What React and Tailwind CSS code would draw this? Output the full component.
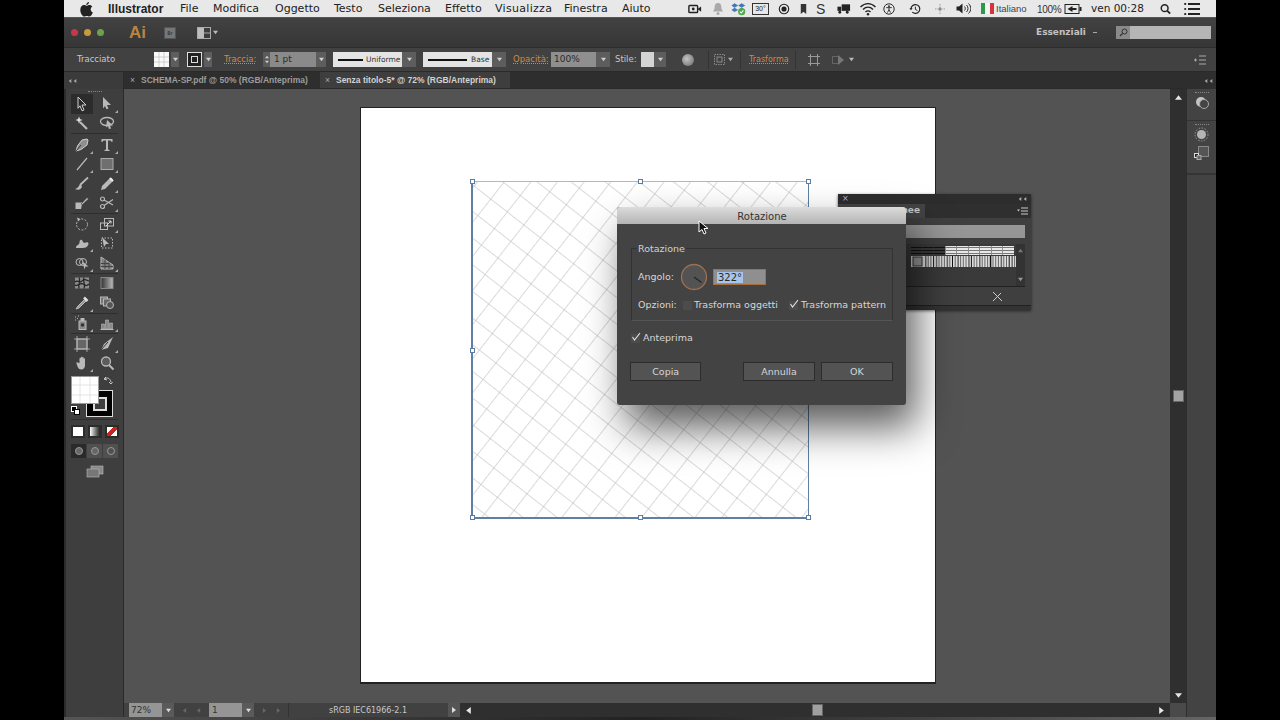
import React from "react";

const ui = "font-['DejaVu_Sans','Liberation_Sans',sans-serif]";

const Tri = ({ dir = "down", c = "#cfcfcf", s = 6 }) => {
  const p = { down: "0,1 6,1 3,5", up: "0,5 6,5 3,1", right: "1,0 5,3 1,6", left: "5,0 1,3 5,6" }[dir];
  return (
    <svg width={s} height={s} viewBox="0 0 6 6" className="shrink-0">
      <polygon points={p} fill={c} />
    </svg>
  );
};

const Ico = ({ children, w = 16, h = 16, vb = "0 0 16 16" }) => (
  <svg width={w} height={h} viewBox={vb} className="shrink-0" fill="none">
    {children}
  </svg>
);

/* ---------- menu bar ---------- */
const MenuIcons = () => (
  <div className="flex items-center h-full text-[#222] whitespace-nowrap">
    <Ico w={14} h={12} vb="0 0 16 12">
      <rect x="1" y="2" width="10" height="8" rx="1" stroke="#222" strokeWidth="1.6" />
      <path d="M11 6l4-3v6z" fill="#222" />
      <circle cx="6" cy="6" r="1.6" fill="#222" />
    </Ico>
    <div className="w-[10px]" />
    <Ico w={12} h={14} vb="0 0 12 14">
      <path d="M6 1c2.5 0 3.4 2 3.4 4.5 0 2 1.200 3 1.600 4H1c.4-1 1.600-2 1.600-4C2.600 3 3.500 1 6 1z" fill="#a9a9a9" />
      <circle cx="6" cy="11.500" r="1.500" fill="#a9a9a9" />
    </Ico>
    <div className="w-[7px]" />
    <Ico w={16} h={16} vb="0 0 18 16">
      <path d="M4 1.500l4 2.500-4 2.500L0.500 4zM12 1.500l4 2.500-4 2.500L8 4zM4 6.500l4 2.500-4 2.500-3.500-2.500zM12 6.500l4 2.500-4 2.500-4-2.500z" fill="#3f79b8" />
      <circle cx="12" cy="11" r="4" fill="#4da94a" />
      <path d="M10 11l1.500 1.500 2.500-3" stroke="#fff" strokeWidth="1.200" />
    </Ico>
    <div className="w-[5px]" />
    <div className="w-[17px] h-[12px] border border-[#333] text-[7px] leading-[10px] text-center font-['Liberation_Sans',sans-serif]">30°</div>
    <div className="w-[9px]" />
    <Ico w={12} h={12} vb="0 0 14 14">
      <circle cx="7" cy="7" r="5.500" stroke="#222" strokeWidth="1.300" />
      <circle cx="7" cy="7" r="3" fill="#222" />
    </Ico>
    <div className="w-[10px]" />
    <Ico w={7} h={12} vb="0 0 9 13">
      <path d="M1 0h7v13L4.500 10 1 13z" fill="#333" />
    </Ico>
    <div className="w-[9px]" />
    <span className="text-[14px] leading-none font-['Liberation_Sans',sans-serif] text-[#333] w-[9px]">S</span>
    <div className="w-[12px]" />
    <Ico w={14} h={12} vb="0 0 15 12">
      <rect x="5" y="1" width="9" height="7" fill="#222" />
      <rect x="0.500" y="3.500" width="4" height="4.500" fill="#222" />
      <circle cx="3" cy="9.500" r="1.500" fill="#222" />
      <circle cx="11" cy="9.500" r="1.500" fill="#222" />
    </Ico>
    <div className="w-[8px]" />
    <Ico w={18} h={14} vb="0 0 17 14">
      <path d="M1 5c4.500-4.500 10.500-4.500 15 0M3.500 7.500c3-3 7-3 10 0M6 10c1.500-1.500 3.500-1.500 5 0" stroke="#222" strokeWidth="1.400" />
      <circle cx="8.500" cy="12.200" r="1.200" fill="#222" />
    </Ico>
    <div className="w-[6px]" />
    <Ico w={12} h={12} vb="0 0 15 15">
      <circle cx="7.500" cy="7.500" r="6.500" stroke="#222" strokeWidth="1.200" />
      <circle cx="7.500" cy="4" r="1.100" fill="#222" />
      <path d="M4 5.800h7M7.500 5.800v3M7.500 8.500l-2 3.500M7.500 8.500l2 3.500" stroke="#222" strokeWidth="1.100" />
    </Ico>
    <div className="w-[14px]" />
    <Ico w={12} h={12} vb="0 0 15 14">
      <path d="M2.500 7a5.500 5.500 0 1 1 1.600 3.900" stroke="#222" strokeWidth="1.500" />
      <path d="M0.500 6h4L2.500 8.500z" fill="#222" />
      <path d="M8 4v3.500l2.500 1.500" stroke="#222" strokeWidth="1.200" />
    </Ico>
    <div className="w-[14px]" />
    <Ico w={10} h={10} vb="0 0 12 12">
      <circle cx="6" cy="6" r="2" fill="#8a8a8a" />
      <path d="M6 0v3M6 9v3M0 6h3M9 6h3" stroke="#8a8a8a" strokeWidth="1.200" strokeDasharray="1 1" />
    </Ico>
    <div className="w-[11px]" />
    <Ico w={15} h={13} vb="0 0 15 13">
      <path d="M0.500 4.500h2.500L6.500 1.500v10L3 8.500H0.500z" fill="#222" />
      <path d="M8.500 4.500c1 1 1 3 0 4M10.500 3c2 2 2 5 0 7M12.500 1.500c3 3 3 7 0 10" stroke="#222" strokeWidth="1" />
    </Ico>
    <div className="w-[10px]" />
    <div className="flex h-[11px] w-[13px]">
      <div className="w-1/3 bg-[#2a9a4a]" />
      <div className="w-1/3 bg-[#f4f4f4]" />
      <div className="w-1/3 bg-[#d8333a]" />
    </div>
    <span className="text-[9.5px] w-[32px] text-[#444] ml-[2px] pt-px font-['Liberation_Sans',sans-serif]">Italiano</span>
    <span className="text-[10px] w-[23px] text-[#333] ml-[9px] pt-px tracking-[-0.3px] font-['Liberation_Sans',sans-serif]">100%</span>
    <div className="ml-[4px]">
      <Ico w={18} h={10} vb="0 0 17 10">
        <rect x="0.500" y="0.500" width="14" height="9" stroke="#222" />
        <path d="M15 3h2v4h-2z" fill="#222" />
        <path d="M3 5l5-3v2h4v2H8v2z" fill="#222" />
      </Ico>
    </div>
    <span className="text-[10.5px] w-[55px] text-[#222] ml-[9px] pt-px">ven 00:28</span>
    <div className="ml-[14px]">
      <Ico w={11} h={12} vb="0 0 13 13">
        <circle cx="5.500" cy="5.500" r="4" stroke="#222" strokeWidth="1.800" />
        <path d="M8.500 8.500l3.500 3.500" stroke="#222" strokeWidth="2.200" />
      </Ico>
    </div>
    <div className="ml-[13px]">
      <Ico w={16} h={12} vb="0 0 16 12">
        <path d="M4 1h12M4 6h12M4 11h12" stroke="#222" strokeWidth="1.800" />
        <circle cx="1.200" cy="1" r="1.100" fill="#222" />
        <circle cx="1.200" cy="6" r="1.100" fill="#222" />
        <circle cx="1.200" cy="11" r="1.100" fill="#222" />
      </Ico>
    </div>
  </div>
);

const MenuBar = () => (
  <div className={`h-[18px] shrink-0 flex items-center justify-between bg-[#e8e8e8] pl-[16px] pr-[16px] border-b border-[#555] ${ui}`}>
    <div className="flex items-center text-[11px] text-[#222] whitespace-nowrap pt-px">
      <svg width="13" height="15" viewBox="0 0 13 15" className="shrink-0 mr-[15px]">
        <path d="M9 0c.1 1.600-1.300 3-2.700 3C6.100 1.500 7.600.1 9 0zM6.500 3.800c.7 0 1.700-.8 3-.8 1.100 0 2.200.6 2.900 1.600-2.500 1.400-2.100 5 .5 6-.7 1.700-2 4-3.500 4-.9 0-1.400-.6-2.500-.6s-1.700.6-2.600.6C2.500 14.600.3 11.200.3 8 .3 5 2.200 3.100 4 3.100c1 0 1.900.7 2.500.7z" fill="#222" />
      </svg>
      <span className="w-[72px] font-bold text-[12px] font-['Liberation_Sans',sans-serif]">Illustrator</span>
      <span className="w-[33px]">File</span>
      <span className="w-[62px]">Modifica</span>
      <span className="w-[59px]">Oggetto</span>
      <span className="w-[44px]">Testo</span>
      <span className="w-[67px]">Seleziona</span>
      <span className="w-[50px]">Effetto</span>
      <span className="w-[69px] tracking-[0.3px]">Visualizza</span>
      <span className="w-[58px]">Finestra</span>
      <span className="w-[40px]">Aiuto</span>
    </div>
    <MenuIcons />
  </div>
);

/* ---------- title bar ---------- */
const TitleBar = () => (
  <div className={`h-[30px] shrink-0 flex items-center bg-gradient-to-b from-[#424242] to-[#363636] border-b border-[#2c2c2c] pl-[7px] pr-[5px] ${ui}`}>
    <div className="flex gap-[6px] items-center">
      <div className="w-[7px] h-[7px] rounded-full bg-[#c23a4a]" />
      <div className="w-[7px] h-[7px] rounded-full bg-[#c89a3c]" />
      <div className="w-[7px] h-[7px] rounded-full bg-[#6ea24a]" />
    </div>
    <span className="ml-[25px] text-[17px] leading-none font-bold text-[#b98440] font-['Liberation_Sans',sans-serif]">Ai</span>
    <div className="ml-[18px] w-[12px] h-[12px] bg-[#777] border border-[#555] text-[5px] leading-[10px] text-center text-[#222]">Br</div>
    <div className="ml-[21px] flex items-center gap-[2px]">
      <Ico w={14} h={12} vb="0 0 14 12">
        <rect x="0.500" y="0.500" width="13" height="11" stroke="#aaa" />
        <rect x="1" y="1" width="6" height="10" fill="#bdbdbd" />
        <path d="M7 6h7" stroke="#aaa" />
      </Ico>
      <Tri s={5} c="#bbb" />
    </div>
    <div className="ml-auto flex items-center">
      <span className="text-[9px] font-bold text-[#c2c2c2] w-[49px] whitespace-nowrap">Essenziali</span>
      <div className="ml-[8px] w-[4px] h-[1px] bg-[#aaa]" />
      <div className="ml-[19px] w-[95px] h-[13px] flex bg-[#b5b5b5]">
        <div className="w-[14px] h-full flex items-center justify-center bg-[#8a8a8a]">
          <Ico w={9} h={9} vb="0 0 9 9">
            <circle cx="5.500" cy="3.500" r="2.500" stroke="#333" />
            <path d="M3.500 5.500L1 8" stroke="#333" strokeWidth="1.200" />
          </Ico>
        </div>
      </div>
    </div>
  </div>
);

/* ---------- control bar ---------- */
const DD = ({ w = "w-[10px]" }) => (
  <div className={`${w} h-[15px] bg-[#5d5d5d] flex items-center justify-center`}>
    <Tri s={5} c="#d0d0d0" />
  </div>
);
const GridSwatch = () => (
  <svg width="15" height="15" viewBox="0 0 15 15" className="shrink-0">
    <rect width="15" height="15" fill="#fafafa" />
    <path d="M5 0v15M10 0v15M0 5h15M0 10h15" stroke="#bbb" strokeWidth="0.600" />
  </svg>
);
const Orange = ({ children, cls = "" }) => (
  <span className={`text-[8.5px] text-[#cc8a42] underline decoration-dotted whitespace-nowrap ${cls}`}>{children}</span>
);

const ControlBar = () => (
  <div className={`h-[24px] shrink-0 flex items-center bg-[#414141] border-b border-[#2a2a2a] pl-[13px] pr-[10px] ${ui}`}>
    <span className="text-[8.5px] text-[#c8c8c8] w-[77px]">Tracciato</span>
    <GridSwatch />
    <div className="ml-[2px]"><DD w="w-[8px]" /></div>
    <div className="ml-[8px] w-[15px] h-[15px] bg-[#222] border border-[#ddd] flex items-center justify-center">
      <div className="w-[7px] h-[7px] border border-[#ddd]" />
    </div>
    <div className="ml-[2px]"><DD w="w-[8px]" /></div>
    <Orange cls="ml-[12px] w-[30px]">Traccia:</Orange>
    <div className="ml-[9px] w-[7px] h-[15px] flex flex-col items-center justify-center bg-[#5a5a5a] gap-[1px]">
      <Tri dir="up" s={4} />
      <Tri s={4} />
    </div>
    <div className="w-[46px] h-[15px] bg-[#8a8a8a] text-[9px] leading-[15px] pl-[4px] text-[#2a2a2a]">1 pt</div>
    <DD />
    <div className="ml-[7px] w-[69px] h-[15px] bg-[#e4e4e4] flex items-center pl-[5px] whitespace-nowrap overflow-hidden">
      <div className="w-[25px] h-[2px] bg-[#111] shrink-0" />
      <span className="ml-[3px] text-[7.5px] text-[#333]">Uniforme</span>
    </div>
    <DD w="w-[14px]" />
    <div className="ml-[7px] w-[69px] h-[15px] bg-[#e4e4e4] flex items-center pl-[5px]">
      <div className="w-[39px] h-[2px] bg-[#111]" />
      <span className="ml-[4px] text-[7.5px] text-[#333]">Base</span>
    </div>
    <DD w="w-[14px]" />
    <Orange cls="ml-[7px] w-[32px]">Opacità:</Orange>
    <div className="ml-[6px] w-[45px] h-[15px] bg-[#8f8f8f] text-[9px] leading-[14px] pl-[3px] text-[#2a2a2a]">100%</div>
    <DD w="w-[14px]" />
    <span className="ml-[5px] text-[8.5px] text-[#c8c8c8] w-[21px]">Stile:</span>
    <div className="ml-[5px] w-[13px] h-[15px] bg-[#d4d4d4]" />
    <DD w="w-[12px]" />
    <div className="ml-[16px] w-[12px] h-[12px] rounded-full bg-[radial-gradient(circle_at_40%_40%,#c4c4c4,#666)]" />
    <div className="ml-[14px] w-px h-[18px] bg-[#333]" />
    <div className="ml-[4px] flex items-center gap-[2px]">
      <Ico w={13} h={13} vb="0 0 13 13">
        <rect x="1.500" y="1.500" width="10" height="10" stroke="#8a8a8a" strokeDasharray="1.500 1" />
        <rect x="4" y="4" width="5" height="5" stroke="#8a8a8a" />
      </Ico>
      <Tri s={5} c="#aaa" />
    </div>
    <div className="ml-[7px] w-px h-[18px] bg-[#333]" />
    <span className="ml-[8px] w-[41px] text-[8px] text-[#cc8a42] underline decoration-dotted whitespace-nowrap">Trasforma</span>
    <div className="ml-[5px] w-px h-[18px] bg-[#333]" />
    <div className="ml-[12px]">
      <Ico w={12} h={12} vb="0 0 12 12">
        <rect x="2.500" y="2.500" width="7" height="7" stroke="#999" />
        <path d="M2.500 0v2M9.500 0v2M2.500 10v2M9.500 10v2M0 2.500h2M10 2.500h2M0 9.500h2M10 9.500h2" stroke="#999" />
      </Ico>
    </div>
    <div className="ml-[12px] flex items-center gap-[4px]">
      <Ico w={13} h={12} vb="0 0 13 12">
        <rect x="0.500" y="2.500" width="6" height="7" stroke="#888" strokeDasharray="1 1" />
        <path d="M6 1l6 5-6 5z" fill="#777" />
      </Ico>
      <Tri s={5} c="#bbb" />
    </div>
    <div className="ml-auto">
      <Ico w={12} h={10} vb="0 0 12 10">
        <path d="M5 1h7M5 5h7M5 9h7M0 5h3" stroke="#aaa" />
        <path d="M1.500 3.500v3" stroke="#aaa" />
      </Ico>
    </div>
  </div>
);

/* ---------- tabs ---------- */
const Tab = ({ label, active, cls }) => (
  <div className={`h-full flex items-center whitespace-nowrap text-[8.5px] font-bold font-['Liberation_Sans',sans-serif] ${cls} ${active ? "bg-[#3e3e3e] text-[#d2d2d2]" : "text-[#9c9c9c]"}`}>
    <span className="mr-[6px] text-[#aaa] font-normal">×</span>
    {label}
  </div>
);
const TabBar = () => (
  <div className={`h-[17px] shrink-0 flex bg-[#2e2e2e] ${ui}`}>
    <div className="w-[60px] shrink-0 bg-[#3b3b3b] border-r border-[#2a2a2a] pl-[4px] flex items-center gap-[1px]">
      <Tri dir="left" s={4} c="#aaa" />
      <Tri dir="left" s={4} c="#aaa" />
    </div>
    <div className="flex-1 flex pl-[6px] border-b border-[#2a2a2a]">
      <Tab label="SCHEMA-SP.pdf @ 50% (RGB/Anteprima)" cls="w-[190px]" />
      <Tab label="Senza titolo-5* @ 72% (RGB/Anteprima)" active cls="w-[190px] pl-[5px]" />
    </div>
    <div className="w-[30px] shrink-0 bg-[#2e2e2e] flex items-center justify-end pr-[3px] gap-[1px]">
      <Tri dir="left" s={4} c="#aaa" />
      <Tri dir="left" s={4} c="#aaa" />
    </div>
  </div>
);

/* ---------- tools ---------- */
const G = "#b9b9b9";
const tools = {
  sel: <path d="M4 1l8 8H8l2 5-2 .800-2-5-2 2.500z" fill="#2a2a2a" stroke="#cfcfcf" />,
  dsel: <path d="M4 1l8 8H8l1.500 3.500-2 .800L6 10l-2 2.500z" fill={G} />,
  wand: <g><path d="M6 7l7 7" stroke={G} strokeWidth="2.200" /><path d="M5 1.500l1 2.500 2.500 1-2.500 1-1 2.500-1-2.500L1.500 5 4 4z" fill="#ddd" /></g>,
  lasso: <g><ellipse cx="8" cy="6.500" rx="6.500" ry="4" stroke={G} strokeWidth="1.300" /><path d="M8 5l6 5.500h-3l1 3-2 .500-1-3-2 1.500z" fill={G} /></g>,
  pen: <g><path d="M13 2L8 3 3.500 9 2 14l5-1.500L13 8l1-5z" fill="#8f8f8f" stroke="#cfcfcf" /><path d="M2 14l5-6" stroke="#333" /></g>,
  text: <path d="M2.500 2h11v3h-1c-.2-1-.6-1.500-2-1.500H9v9l1.500.5v1h-5v-1l1.500-.5v-9H5.500c-1.400 0-1.800.5-2 1.500h-1z" fill={G} />,
  line: <path d="M3 14L13 2" stroke={G} strokeWidth="1.200" />,
  rect: <rect x="2" y="2.500" width="12" height="11" fill="#6f6f6f" stroke="#aaa" />,
  brush: <g><path d="M14 1.500L6 9" stroke={G} strokeWidth="1.800" /><path d="M6.500 8.500c-2 .5-1.500 3.500-5.500 4.500 3 1.500 7 .5 7-3z" fill={G} /></g>,
  pencil: <g><path d="M11 2l3 3-8 8-4 1 1-4z" fill={G} /><path d="M11 2l3 3" stroke="#eee" strokeWidth="2" /></g>,
  blob: <g><path d="M1.500 7.500h7l-1.500 6.500H1.500z" fill={G} /><path d="M7 9l6-6.500 1.500 1.500-6.500 6z" fill={G} stroke="#333" strokeWidth="0.500" /></g>,
  scissors: <g><circle cx="3.500" cy="4" r="2" stroke={G} strokeWidth="1.200" /><circle cx="3.500" cy="11.500" r="2" stroke={G} strokeWidth="1.200" /><path d="M5 5l9 5M5 10.500l9-6" stroke={G} strokeWidth="1.200" /></g>,
  rotate: <g><circle cx="8" cy="8.500" r="5.500" stroke={G} strokeDasharray="2 1.500" /><path d="M3 1.500l3.500 1.500-2.500 2.500z" fill={G} /></g>,
  scale: <g><rect x="1.500" y="7" width="7" height="6.500" stroke={G} /><rect x="5.500" y="2.500" width="9" height="7.500" stroke={G} /><path d="M7 10l5-5M12 5H9.500M12 5v2.500" stroke="#ddd" /></g>,
  warp: <path d="M2 13c0-3 1.500-2 3-4 1-1.500 0-3 1.500-4s2 .5 2.500 2c.5 1 2 1 3 .5 1.500-.5 2.500 0 2.500 1.500-1 3-3 4-6 4H2z" fill={G} />,
  free: <g><rect x="2.500" y="3" width="11" height="10" stroke={G} strokeDasharray="1.500 1.500" /><path d="M3 2l7 7H7l-2 3z" fill={G} /></g>,
  shape: <g><circle cx="5.500" cy="7" r="3.500" stroke={G} /><circle cx="9" cy="7" r="3.500" stroke={G} /><path d="M8.500 6.500l6 5h-3l-1 3z" fill={G} /></g>,
  persp: <g><path d="M2 2l12 8v4H2z" fill="#7e7e7e" stroke={G} /><path d="M6 4.500V14M10 7.500V14M2 8.500h8M2 11.500h12" stroke="#444" /></g>,
  mesh: <g><rect x="1" y="2.500" width="14" height="11" fill="#8c8c8c" /><path d="M1 7c3-3 5 2 7-1s4-1 7 0M1 10c3 2 5-3 8-1s4 2 6 0M5 2.500c2 3-1 6 0 11M10 2.500c-2 3 2 6 0 11" stroke="#222" strokeWidth="1.200" /></g>,
  grad: <g><defs><linearGradient id="tg"><stop offset="0" stopColor="#333" /><stop offset="1" stopColor="#bbb" /></linearGradient></defs><rect x="2" y="2.500" width="12" height="11" fill="url(#tg)" stroke="#888" /></g>,
  eye: <g><path d="M12 3L4 11l-2 3 3-1 8-8" fill="#9a9a9a" stroke={G} /><path d="M10 2.500l3.500 3.500" stroke="#ddd" strokeWidth="2.500" /></g>,
  blend: <g><rect x="1.500" y="2" width="7" height="7" fill="#777" stroke={G} /><rect x="4.500" y="4" width="7" height="7" fill="#666" stroke={G} /><circle cx="11" cy="10" r="3.500" fill="#555" stroke={G} /></g>,
  spray: <g><rect x="5" y="6" width="7" height="8.500" fill="#8a8a8a" stroke={G} /><circle cx="8.500" cy="10" r="1.800" fill="#333" /><rect x="6.500" y="3" width="4" height="3" fill={G} /><path d="M1 2h1M3 3.500h1M1 5h1M4 1h1" stroke={G} /></g>,
  chart: <g><path d="M1.500 14.500h13" stroke={G} /><path d="M2.500 9h3v5h-3zM6.500 5h3v9h-3zM10.500 8h3v6h-3z" fill="#8a8a8a" stroke={G} strokeWidth="0.600" /></g>,
  art: <g><rect x="3" y="3" width="10" height="10" fill="#666" stroke={G} /><path d="M0 3h16M0 13h16M3 0v16M13 0v16" stroke={G} strokeWidth="0.800" /></g>,
  slice: <g><path d="M14 1L5 8l-3 6 7-2z" fill={G} /><path d="M2 14l7-8" stroke="#333" /></g>,
  hand: <path d="M4 8V3.500c0-1 1.300-1 1.300 0V7V2.500c0-1 1.500-1 1.500 0V7V2.800c0-1 1.400-1 1.400 0V7.500V4c0-1 1.300-1 1.300 0v6.500c0 2-1.500 4-3.500 4-2.500 0-3-1-4-3L1 8.500c-.5-1 .8-1.600 1.400-.8z" fill={G} transform="translate(1.500 0)" />,
  zoom: <g><circle cx="7" cy="6.500" r="4.500" fill="#5c5c5c" stroke={G} strokeWidth="1.300" /><path d="M10 10l4.500 4.500" stroke={G} strokeWidth="2" /></g>,
};

const T = ({ n, active, corner }) => (
  <div className={`relative w-[22px] h-[19.5px] flex items-center justify-center ${active ? "bg-[#2c2c2c]" : ""}`}>
    <Ico>{tools[n]}</Ico>
    {corner && <div className="absolute right-0 bottom-[1px] w-0 h-0 border-l-[3px] border-l-transparent border-b-[3px] border-b-[#aaa]" />}
  </div>
);
const Row = ({ a, b, ac, bc, active }) => (
  <div className="flex justify-center gap-[3px]">
    <T n={a} corner={ac} active={active} />
    <T n={b} corner={bc} />
  </div>
);
const Sep = () => <div className="h-px bg-[#2e2e2e] mx-[5px]" />;

const Grip = ({ cls = "" }) => <div className={`h-[2px] w-[14px] border-t border-dotted border-[#888] ${cls}`} />;

const ToolPanel = () => (
  <div className="w-[60px] shrink-0 bg-[#3e3e3e] border-l-2 border-[#2b2b2b] border-r border-r-[#2a2a2a] flex flex-col">
    <div className="h-[5px] flex justify-center pt-[2px]"><Grip /></div>
    <Row a="sel" b="dsel" bc active />
    <Row a="wand" b="lasso" />
    <Sep />
    <div className="h-px" />
    <Row a="pen" b="text" ac bc />
    <Row a="line" b="rect" ac bc />
    <Row a="brush" b="pencil" bc />
    <Row a="blob" b="scissors" bc />
    <Sep />
    <Row a="rotate" b="scale" bc />
    <Row a="warp" b="free" ac />
    <Row a="shape" b="persp" ac bc />
    <Sep />
    <Row a="mesh" b="grad" />
    <Row a="eye" b="blend" ac />
    <Sep />
    <Row a="spray" b="chart" ac bc />
    <Sep />
    <Row a="art" b="slice" bc />
    <Row a="hand" b="zoom" ac />
    <div className="relative h-[43px] shrink-0 mt-[3px]">
      <div className="absolute left-[20px] top-[14px] w-[27px] h-[27px] bg-black border border-[#ddd] flex items-center justify-center">
        <div className="w-[14px] h-[14px] border-2 border-[#ddd] bg-[#3e3e3e]" />
      </div>
      <div className="absolute left-[5px] top-0 w-[28px] h-[28px] bg-white border border-[#999]">
        <svg width="26" height="26" viewBox="0 0 26 26">
          <path d="M8 0v26M18 0v26M0 8h26M0 18h26" stroke="#ddd" strokeWidth="0.800" />
        </svg>
      </div>
      <div className="absolute left-[37px] top-0">
        <Ico w={10} h={10} vb="0 0 10 10"><path d="M1 3c3-2 6-1 7 3M1 3l2-2M1 3l3 1M8 8L6 6M8 8l1.500-2" stroke="#ccc" /></Ico>
      </div>
      <div className="absolute left-[5px] top-[30px] w-[6px] h-[6px] bg-black border border-white" />
      <div className="absolute left-[8px] top-[33px] w-[6px] h-[6px] bg-white border border-black" />
    </div>
    <Sep />
    <div className="flex gap-[3px] justify-center mt-[5px]">
      <div className="w-[14px] h-[13px] bg-white border-2 border-[#2c2c2c]" />
      <div className="w-[14px] h-[13px] bg-gradient-to-r from-white to-[#222] border-2 border-[#2c2c2c]" />
      <div className="w-[14px] h-[13px] bg-[linear-gradient(135deg,#fff_35%,#c22_35%,#c22_65%,#fff_65%)] border-2 border-[#2c2c2c]" />
    </div>
    <div className="mt-[6px] mx-[5px] flex h-[14px] gap-px">
      <div className="flex-1 bg-[#2a2a2a] flex items-center justify-center"><div className="w-[8px] h-[8px] rounded-full border border-[#999] bg-[#666]" /></div>
      <div className="flex-1 bg-[#505050] flex items-center justify-center"><div className="w-[8px] h-[8px] rounded-full border border-[#999] bg-[#666]" /></div>
      <div className="flex-1 bg-[#505050] flex items-center justify-center"><div className="w-[8px] h-[8px] rounded-full border border-[#999]" /></div>
    </div>
    <div className="mt-[7px] flex justify-center">
      <Ico w={18} h={13} vb="0 0 18 13">
        <rect x="5" y="1" width="12" height="8" fill="#888" stroke="#bbb" strokeWidth="0.600" />
        <rect x="1" y="4" width="12" height="8" fill="#777" stroke="#bbb" strokeWidth="0.600" />
      </Ico>
    </div>
  </div>
);

/* ---------- artboard ---------- */
const Handle = ({ cls }) => <div className={`absolute w-[5px] h-[5px] bg-white border border-[#5c7da3] ${cls}`} />;

const Selection = () => (
  <div className="absolute left-[110px] top-[73px] w-[338px] h-[338px] border border-[#5f7fa3] border-t-[#a9bac9] border-l-2 border-b-2">
    <svg width="335" height="335" className="block">
      <defs>
        <pattern id="hatch" width="21" height="21" patternUnits="userSpaceOnUse" patternTransform="translate(33.7 268.7) rotate(38)">
          <path d="M0 0H21M0 0V21" stroke="#b6b6b6" strokeWidth="1" fill="none" />
        </pattern>
      </defs>
      <rect width="335" height="335" fill="url(#hatch)" />
    </svg>
    <Handle cls="-left-[3px] -top-[3px]" />
    <Handle cls="left-[165px] -top-[3px]" />
    <Handle cls="-right-[3px] -top-[3px]" />
    <Handle cls="-left-[3px] top-[166px]" />
    <Handle cls="-left-[3px] -bottom-[3px]" />
    <Handle cls="left-[165px] -bottom-[3px]" />
    <Handle cls="-right-[3px] -bottom-[3px]" />
  </div>
);

/* ---------- swatch panel ---------- */
const swatchRow1 = [...Array(9)].map((_, i) => i);
const SwatchStrip = () => (
  <svg width="110" height="22" viewBox="0 0 110 22" className="block">
    {swatchRow1.map((i) => (
      <g key={i}>
        <rect x={i * 11.5} y="0" width="11" height="9" fill={i < 3 ? "#3a3a3a" : "#e8e8e8"} />
        {[1, 4, 7].map((y) => (
          <rect key={y} x={i * 11.5} y={y} width="11" height="1" fill={i < 3 ? "#111" : "#777"} />
        ))}
      </g>
    ))}
    <rect x="0" y="10" width="110" height="11" fill="#ddd" />
    {[...Array(36)].map((_, i) => (
      <rect key={i} x={14 + i * 2.700} y="10" width={i % 4 === 0 ? 1.500 : 1} height="11" fill={i % 7 === 3 ? "#111" : "#666"} />
    ))}
    <rect x="2" y="11" width="9" height="9" fill="#999" stroke="#333" />
  </svg>
);
const FloatPanel = () => (
  <div className={`absolute left-[714px] top-[105px] w-[193px] h-[116px] bg-[#3f3f3f] shadow-[0_1px_3px_rgba(0,0,0,0.6)] flex flex-col ${ui}`}>
    <div className="h-[10px] bg-[#2d2d2d] flex items-center justify-between px-[4px]">
      <span className="text-[8px] leading-none text-[#bbb]">×</span>
      <div className="flex gap-px"><Tri dir="left" s={4} c="#aaa" /><Tri dir="left" s={4} c="#aaa" /></div>
    </div>
    <div className="h-[14px] bg-[#2f2f2f] flex items-center justify-between pr-[3px]">
      <div className="w-[87px] h-full bg-[#444] flex items-center justify-end pr-[5px]">
        <span className="text-[9px] font-bold text-[#c8c8c8]">nee</span>
      </div>
      <Ico w={11} h={8} vb="0 0 11 8"><path d="M4 1h7M4 4h7M4 7h7" stroke="#ccc" /><path d="M0 2.500h3L1.500 4.500z" fill="#ccc" /></Ico>
    </div>
    <div className="mt-[7px] mx-[6px] h-[13px] bg-[#969696]" />
    <div className="mt-[6px] mx-[6px] h-[43px] bg-[#3a3a3a] border-b border-[#222] flex justify-end">
      <div className="w-[105px] pt-[2px] overflow-hidden"><SwatchStrip /></div>
      <div className="w-[9px] bg-[#333] flex flex-col justify-between items-center py-[4px]">
        <Tri dir="up" s={5} c="#777" />
        <Tri s={5} c="#999" />
      </div>
    </div>
    <div className="flex-1 flex items-center justify-end pr-[28px]">
      <Ico w={11} h={11} vb="0 0 11 11"><path d="M1 10L9 2M1 1l9 9" stroke="#ccc" /></Ico>
    </div>
    <div className="h-[5px] bg-[#333] flex justify-center items-center border-t border-[#222]" />
  </div>
);

/* ---------- dialog ---------- */
const Check = ({ on }) => (
  <div className="relative w-[9px] h-[9px] bg-[#4c4c4c] shrink-0">
    {on && (
      <svg width="11" height="11" viewBox="0 0 11 11" className="absolute -top-[2px] left-0">
        <path d="M1.500 5l2 3L9 1" stroke="#e4e4e4" strokeWidth="1.100" fill="none" />
      </svg>
    )}
  </div>
);
const Btn = ({ children, cls = "" }) => (
  <div className={`h-[19px] bg-[#535353] border border-[#2c2c2c] flex items-center justify-center text-[9.500px] text-[#d6d6d6] ${cls}`}>{children}</div>
);

const Dialog = () => (
  <div className={`absolute left-[493px] top-[118px] w-[289px] h-[198px] rounded-[3px] bg-[#434343] shadow-[10px_22px_40px_rgba(0,0,0,0.65)] flex flex-col whitespace-nowrap ${ui}`}>
    <div className="h-[17px] shrink-0 rounded-t-[3px] bg-gradient-to-b from-[#dcdcdc] to-[#b4b4b4] flex items-center justify-center text-[10px] text-[#333] pl-[1px] pt-px">Rotazione</div>
    <div className="relative ml-[14px] mr-[13px] mt-[24px] h-[73px] border border-[#333] border-b-[#555]">
      <span className="absolute left-[5px] -top-[6px] bg-[#434343] px-px text-[9.500px] leading-[12px] text-[#d0d0d0]">Rotazione</span>
      <div className="flex items-center mt-[14px] ml-[6px]">
        <span className="text-[9.500px] text-[#d6d6d6] w-[42px]">Angolo:</span>
        <svg width="28" height="28" viewBox="0 0 28 28" className="shrink-0">
          <circle cx="14" cy="14" r="12.500" fill="#535353" stroke="#a0714f" strokeWidth="1.300" />
          <path d="M14 14l7.500 5.500" stroke="#222" strokeWidth="1.100" />
        </svg>
        <div className="ml-[5px] w-[53px] h-[16px] bg-[#8f8f8f] border border-[#a8703f] flex items-center pl-[3px]">
          <span className="bg-[#a9c4ec] text-[10px] leading-[11px] text-[#2a2a2a] px-px">322°</span>
        </div>
      </div>
      <div className="flex items-center mt-[7px] ml-[6px] text-[9.500px] text-[#d6d6d6]">
        <span className="w-[45px]">Opzioni:</span>
        <Check />
        <span className="ml-[2px] w-[95px]">Trasforma oggetti</span>
        <Check on />
        <span className="ml-[3px]">Trasforma pattern</span>
      </div>
    </div>
    <div className="flex items-center mx-[14px] mt-[10px] text-[9.500px] text-[#d6d6d6]">
      <Check on />
      <span className="ml-[3px]">Anteprima</span>
    </div>
    <div className="flex mx-[13px] mt-[17px]">
      <Btn cls="w-[72px]">Copia</Btn>
      <Btn cls="w-[72px] ml-[42px]">Annulla</Btn>
      <Btn cls="w-[73px] ml-[6px] border-[#1e1e1e]">OK</Btn>
    </div>
  </div>
);

const Cursor = () => (
  <svg width="12" height="16" viewBox="0 0 12 16" className="absolute left-[574px] top-[131px]">
    <path d="M1 1v11l3-2.500 2 4.500 2-1-2-4.500h4z" fill="#111" stroke="#fff" strokeWidth="1" />
  </svg>
);

const Canvas = () => (
  <div className="relative flex-1 bg-[#535353] pl-[236px] pt-[18px] overflow-hidden min-w-0">
    <div className="relative w-[576px] h-[577px] bg-white border-l border-t border-b-2 border-r border-[#222]">
      <Selection />
    </div>
    <FloatPanel />
    <Dialog />
    <Cursor />
  </div>
);

const VScroll = () => (
  <div className="w-[16px] shrink-0 bg-[#2f2f2f] flex flex-col items-center pt-[5px] pb-[4px]">
    <Tri dir="up" s={7} c="#e4e4e4" />
    <div className="w-[11px] h-[12px] mt-[289px] bg-[#a3a3a3] border border-[#666]" />
    <div className="flex-1" />
    <Tri s={7} c="#e4e4e4" />
  </div>
);

const Dock = () => (
  <div className="w-[30px] shrink-0 bg-[#434343] border-l border-[#2e2e2e] flex flex-col">
    <div className="h-[32px] border-b border-[#333] flex flex-col items-center">
      <Grip cls="mt-[3px]" />
      <div className="mt-[2px]">
        <Ico w={16} h={14} vb="0 0 16 14">
          <circle cx="7" cy="6" r="5" fill="#c4c4c4" />
          <circle cx="10" cy="8" r="4.500" fill="#444" stroke="#aaa" />
        </Ico>
      </div>
    </div>
    <div className="h-[54px] border-b-2 border-[#343434] flex flex-col items-center">
      <Grip cls="mt-[3px]" />
      <div className="mt-[1px]">
        <Ico w={15} h={15} vb="0 0 15 15">
          <circle cx="7.500" cy="7.500" r="6.500" stroke="#999" strokeDasharray="1.500 1.500" />
          <circle cx="7.500" cy="7.500" r="4.500" fill="#b5b5b5" />
        </Ico>
      </div>
      <div className="mt-[4px]">
        <Ico w={15} h={14} vb="0 0 15 14">
          <rect x="4.500" y="0.500" width="10" height="10" stroke="#888" fill="#555" />
          <rect x="0.500" y="7.500" width="4" height="4" stroke="#ddd" fill="#222" />
          <rect x="3" y="9.500" width="4" height="4" stroke="#aaa" fill="#666" />
        </Ico>
      </div>
    </div>
  </div>
);

const StatusBar = () => (
  <div className={`h-[14px] shrink-0 flex bg-[#2f2f2f] ${ui}`}>
    <div className="w-[60px] shrink-0 bg-[#3e3e3e] border-l-2 border-[#2b2b2b] border-r border-r-[#2a2a2a]" />
    <div className="w-[5px] bg-[#414141]" />
    <div className="w-[33px] bg-[#959595] text-[9px] leading-[14px] pl-[2px] text-[#333]">72%</div>
    <div className="w-[12px] bg-[#5a5a5a] flex items-center justify-center"><Tri s={5} c="#ddd" /></div>
    <div className="w-[35px] bg-[#414141] flex items-center justify-around px-[3px]">
      <Tri dir="left" s={5} c="#666" />
      <Tri dir="left" s={5} c="#666" />
    </div>
    <div className="w-[33px] bg-[#959595] text-[9px] leading-[14px] pl-[3px] text-[#333]">1</div>
    <div className="w-[12px] bg-[#5a5a5a] flex items-center justify-center"><Tri s={5} c="#ddd" /></div>
    <div className="w-[34px] bg-[#414141] flex items-center justify-around px-[3px]">
      <Tri dir="right" s={5} c="#666" />
      <Tri dir="right" s={5} c="#666" />
    </div>
    <div className="w-[160px] bg-[#414141] border-l border-[#333] text-center text-[8px] leading-[15px] text-[#c8c8c8] pr-[1px] whitespace-nowrap">sRGB IEC61966-2.1</div>
    <div className="w-[12px] bg-[#555] flex items-center justify-center"><Tri dir="right" s={6} c="#ddd" /></div>
    <div className="relative flex-1 flex items-center justify-between px-[5px]">
      <Tri dir="left" s={7} c="#e8e8e8" />
      <div className="absolute left-[352px] top-[1px] w-[11px] h-[12px] bg-[#a0a0a0] border border-[#666]" />
      <Tri dir="right" s={7} c="#e8e8e8" />
    </div>
    <div className="w-[16px] bg-[#4a4a4a]" />
    <div className="w-[30px] bg-[#434343] border-l border-[#2e2e2e]" />
  </div>
);

export default function App() {
  return (
    <div className="w-[1280px] h-[720px] bg-black flex justify-center overflow-hidden">
      <div className="w-[1152px] h-full flex flex-col bg-[#2b2b2b]">
        <MenuBar />
        <TitleBar />
        <ControlBar />
        <TabBar />
        <div className="flex-1 flex min-h-0">
          <ToolPanel />
          <Canvas />
          <VScroll />
          <Dock />
        </div>
        <StatusBar />
        <div className="h-[3px] shrink-0 bg-gradient-to-r from-[#555] via-[#222] to-[#666]" />
      </div>
    </div>
  );
}
